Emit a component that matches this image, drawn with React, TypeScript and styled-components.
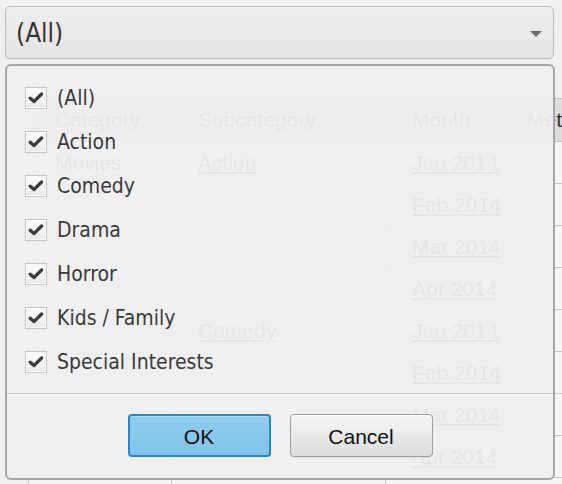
import React from "react";
import styled, { createGlobalStyle } from "styled-components";

const GlobalStyle = createGlobalStyle`
  html, body {
    margin: 0;
    padding: 0;
    background: #f0f0f0;
    width: 562px;
    height: 484px;
    overflow: hidden;
  }
`;

const Page = styled.div`
  position: relative;
  width: 562px;
  height: 484px;
  box-sizing: border-box;
  padding: 6px 0 0 5px;
  overflow: hidden;
`;

const FilterWrap = styled.div`
  position: relative;
  width: 549px;
  z-index: 2;
`;

const Dropdown = styled.div`
  height: 53px;
  box-sizing: border-box;
  display: flex;
  align-items: center;
  justify-content: space-between;
  padding: 0 11px 0 10px;
  border: 1px solid #bdbdbd;
  border-radius: 5px;
  background: linear-gradient(#eeeeee, #e4e4e4);
  box-shadow: 0 1px 1px rgba(0, 0, 0, 0.06);
`;

const labelFont = `"DejaVu Sans Condensed", "DejaVu Sans", sans-serif`;

const DropdownValue = styled.span`
  font-family: ${labelFont};
  font-stretch: condensed;
  font-size: 26px;
  color: #333333;
  margin-top: 1px;
`;

const Arrow = styled.span`
  width: 0;
  height: 0;
  border-left: 6px solid transparent;
  border-right: 6px solid transparent;
  border-top: 6px solid #6a6a6a;
  margin-top: 2px;
`;

const Popup = styled.div`
  position: absolute;
  top: calc(100% + 5px);
  left: 0;
  width: 550px;
  box-sizing: border-box;
  border: 2px solid #a6a6a6;
  border-radius: 6px;
  background: rgba(238, 238, 238, 0.955);
`;

const List = styled.div`
  padding: 10px 0 9px 18px;
  display: flex;
  flex-direction: column;
`;

const Row = styled.label`
  height: 44px;
  display: flex;
  align-items: center;
  gap: 10px;
  font-family: ${labelFont};
  font-stretch: condensed;
  font-size: 21px;
  color: #3a3a3a;
`;

const Box = styled.span`
  width: 22px;
  height: 22px;
  box-sizing: border-box;
  border: 1px solid #c8c8c8;
  background: linear-gradient(#fbfbfb, #e9e9e9);
  box-shadow: inset 0 0 0 1px #f8f8f8;
  display: flex;
  align-items: center;
  justify-content: center;
  flex: none;
`;

const Footer = styled.div`
  border-top: 1px solid #c4c4c4;
  box-shadow: inset 0 1px 0 #fbfbfb;
  padding: 20px 0 21px;
  display: flex;
  justify-content: center;
  gap: 19px;
`;

const Button = styled.button<{ $primary?: boolean }>`
  width: 143px;
  height: 43px;
  box-sizing: border-box;
  border-radius: 4px;
  font-family: "Liberation Sans", Arial, sans-serif;
  font-size: 21px;
  color: #111111;
  padding: 2px 0 0;
  border: ${(p) => (p.$primary ? "2px solid #2b86c6" : "1px solid #9e9e9e")};
  background: ${(p) =>
    p.$primary
      ? "linear-gradient(#8fcdee, #7fc4ea)"
      : "linear-gradient(#f6f6f6, #dddddd)"};
  box-shadow: ${(p) =>
    p.$primary
      ? "inset 0 1px 0 rgba(255,255,255,0.35)"
      : "inset 0 1px 0 #ffffff, 0 1px 0 rgba(0,0,0,0.05)"};
`;

const Table = styled.div`
  margin: 39px 0 0 23px;
  display: grid;
  grid-template-columns: 143px 214px 115px 220px;
  grid-template-rows: 43px;
  grid-auto-rows: 42px;
  border-left: 1px solid #c6c6c6;
  border-top: 1px solid #c6c6c6;
  width: max-content;
  font-family: "Liberation Sans", Arial, sans-serif;
  font-size: 21px;
  color: #333333;
`;

const Cell = styled.div<{ $span?: number; $head?: boolean; $open?: boolean }>`
  box-sizing: border-box;
  grid-row: span ${(p) => p.$span ?? 1};
  padding-left: 26px;
  line-height: ${(p) => (p.$head ? "42px" : "41px")};
  border-bottom: 1px solid #c6c6c6;
  border-right: ${(p) => (p.$open ? "none" : "1px solid #c6c6c6")};
  background: ${(p) => (p.$head ? "#dcdcdc" : "#f4f4f4")};
  white-space: nowrap;
  overflow: hidden;
`;

const Link = styled.span`
  text-decoration: underline;
`;

const Check = () => (
  <svg width="16" height="14" viewBox="0 0 16 14">
    <path
      d="M2.2 7.2 L6 10.6 L13.6 3"
      fill="none"
      stroke="#3d3d3d"
      strokeWidth="3.3"
      strokeLinecap="round"
      strokeLinejoin="round"
    />
  </svg>
);

const items = [
  "(All)",
  "Action",
  "Comedy",
  "Drama",
  "Horror",
  "Kids / Family",
  "Special Interests",
];

const months = ["Jan 2014", "Feb 2014", "Mar 2014", "Apr 2014"];
const subcats = ["Action", "Comedy", "Drama"];

export default function App() {
  return (
    <>
      <GlobalStyle />
      <Page>
        <FilterWrap>
          <Dropdown>
            <DropdownValue>(All)</DropdownValue>
            <Arrow />
          </Dropdown>
          <Popup>
            <List>
              {items.map((it) => (
                <Row key={it}>
                  <Box>
                    <Check />
                  </Box>
                  {it}
                </Row>
              ))}
            </List>
            <Footer>
              <Button $primary>OK</Button>
              <Button>Cancel</Button>
            </Footer>
          </Popup>
        </FilterWrap>
        <Table>
          <Cell $head>Category</Cell>
          <Cell $head>Subcategory</Cell>
          <Cell $head>Month</Cell>
          <Cell $head>Metric</Cell>
          <Cell $span={12}>Movies</Cell>
          {subcats.map((s) => (
            <React.Fragment key={s}>
              <Cell $span={4}>
                <Link>{s}</Link>
              </Cell>
              {months.map((m) => (
                <React.Fragment key={m}>
                  <Cell $open>
                    <Link>{m}</Link>
                  </Cell>
                  <Cell />
                </React.Fragment>
              ))}
            </React.Fragment>
          ))}
        </Table>
      </Page>
    </>
  );
}
